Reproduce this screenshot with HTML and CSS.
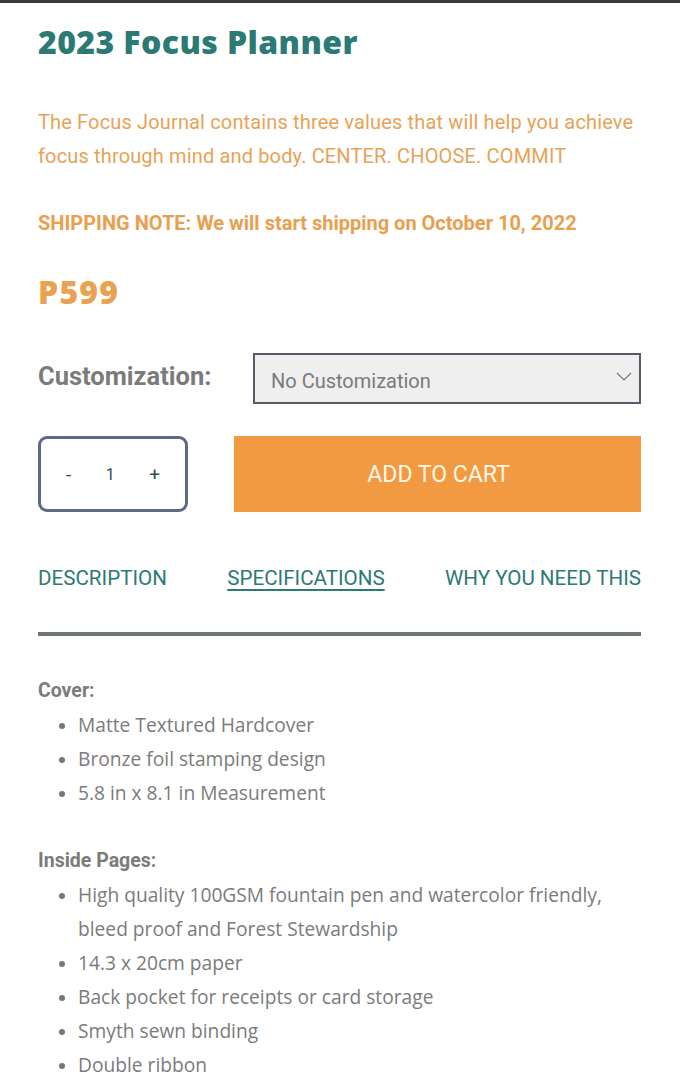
FILE: index.html
```html
<!DOCTYPE html>
<html>
<head>
<meta charset="utf-8">
<link rel="stylesheet" href="styles.css">
</head>
<body>
<div class="topbar"></div>
<main class="page">
  <h1 class="title">2023 Focus Planner</h1>
  <p class="desc">The Focus Journal contains three values that will help you achieve focus through mind and body. CENTER. CHOOSE. COMMIT</p>
  <p class="note">SHIPPING NOTE: We will start shipping on October 10, 2022</p>
  <div class="price">P599</div>
  <div class="custom-row">
    <label class="custom-label">Customization:</label>
    <div class="select">
      <span>No Customization</span>
      <svg class="chev" width="16" height="10" viewBox="0 0 16 10"><path d="M1 1 L8 8 L15 1" fill="none" stroke="#777" stroke-width="1.2"/></svg>
    </div>
  </div>
  <div class="buy-row">
    <div class="qty"><span>-</span><span class="num">1</span><span>+</span></div>
    <button class="cart">ADD TO CART</button>
  </div>
  <nav class="tabs">
    <span>DESCRIPTION</span>
    <span class="active">SPECIFICATIONS</span>
    <span>WHY YOU NEED THIS</span>
  </nav>
  <div class="rule"></div>
  <section class="spec">
    <h3>Cover:</h3>
    <ul>
      <li>Matte Textured Hardcover</li>
      <li>Bronze foil stamping design</li>
      <li>5.8 in x 8.1 in Measurement</li>
    </ul>
  </section>
  <section class="spec">
    <h3>Inside Pages:</h3>
    <ul>
      <li>High quality 100GSM fountain pen and watercolor friendly, bleed proof and Forest Stewardship</li>
      <li>14.3 x 20cm paper</li>
      <li>Back pocket for receipts or card storage</li>
      <li>Smyth sewn binding</li>
      <li>Double ribbon</li>
    </ul>
  </section>
</main>
</body>
</html>
```
FILE: styles.css
```css
html, body { margin: 0; padding: 0; background: #fff; }
body { font-family: Roboto, "Liberation Sans", sans-serif; }
.topbar { height: 3px; background: #3a3a3a; }
.page { padding: 0 39px 0 38px; }
.title {
  margin: 21px 0 0;
  font-family: "Open Sans", sans-serif;
  font-weight: 800;
  font-size: 32px;
  line-height: 36px;
  color: #2b7a73;
  letter-spacing: 0.4px;
}
.desc {
  margin: 45px 0 0;
  font-size: 20px;
  line-height: 34px;
  letter-spacing: 0.15px;
  color: #e8a257;
}
.note {
  margin: 33px 0 0;
  font-size: 20px;
  line-height: 34px;
  font-weight: 700;
  color: #e8a050;
}
.price {
  margin-top: 34px;
  font-family: "Open Sans", sans-serif;
  font-weight: 800;
  font-size: 32px;
  line-height: 36px;
  letter-spacing: 1.2px;
  color: #eba150;
}
.custom-row { display: flex; align-items: center; margin-top: 43px; }
.custom-label {
  width: 215px;
  font-size: 25.5px;
  font-weight: 700;
  color: #7b7b7b;
  margin-top: -5px;
}
.select {
  flex: 1;
  height: 51px;
  box-sizing: border-box;
  border: 2px solid #555c66;
  background: #efefef;
  display: flex;
  align-items: center;
  justify-content: space-between;
  padding: 0 7px 0 16px;
  font-size: 20px;
  color: #7a7a7a;
}
.select span { margin-top: 4px; }
.chev { margin-top: -4px; }
.buy-row { display: flex; gap: 46px; margin-top: 32px; }
.qty {
  width: 150px;
  height: 76px;
  box-sizing: border-box;
  border: 3px solid #5b6a86;
  border-radius: 9px;
  display: flex;
  align-items: center;
  justify-content: space-between;
  padding: 0 25px 0 25px;
  font-size: 19px;
  color: #2f4f4f;
}
.qty .num { font-size: 16px; }
.cart {
  flex: 1;
  height: 76px;
  border: none;
  background: #f29a42;
  color: #fff8ea;
  font-family: Roboto, sans-serif;
  font-size: 23px;
  padding: 0 0 0 2px;
  cursor: pointer;
}
.tabs {
  display: flex;
  justify-content: space-between;
  margin-top: 54px;
  font-size: 20.6px;
  line-height: 24px;
  color: #2b7a73;
}
.tabs .active { text-decoration: underline; text-underline-offset: 4px; }
.rule { height: 4px; background: #6f767a; margin-top: 42px; }
.spec { color: #7b7b7b; }
.spec h3 {
  margin: 34px 0 0;
  font-size: 19.5px;
  line-height: 34px;
  font-weight: 700;
}
.spec:first-of-type h3 { margin-top: 38px; }
.spec ul { margin: 0; padding-left: 40px; }
.spec li {
  font-family: "Open Sans", sans-serif;
  font-size: 19.2px;
  line-height: 34px;
}
.spec li::marker { font-size: 17px; color: #777; }
```
